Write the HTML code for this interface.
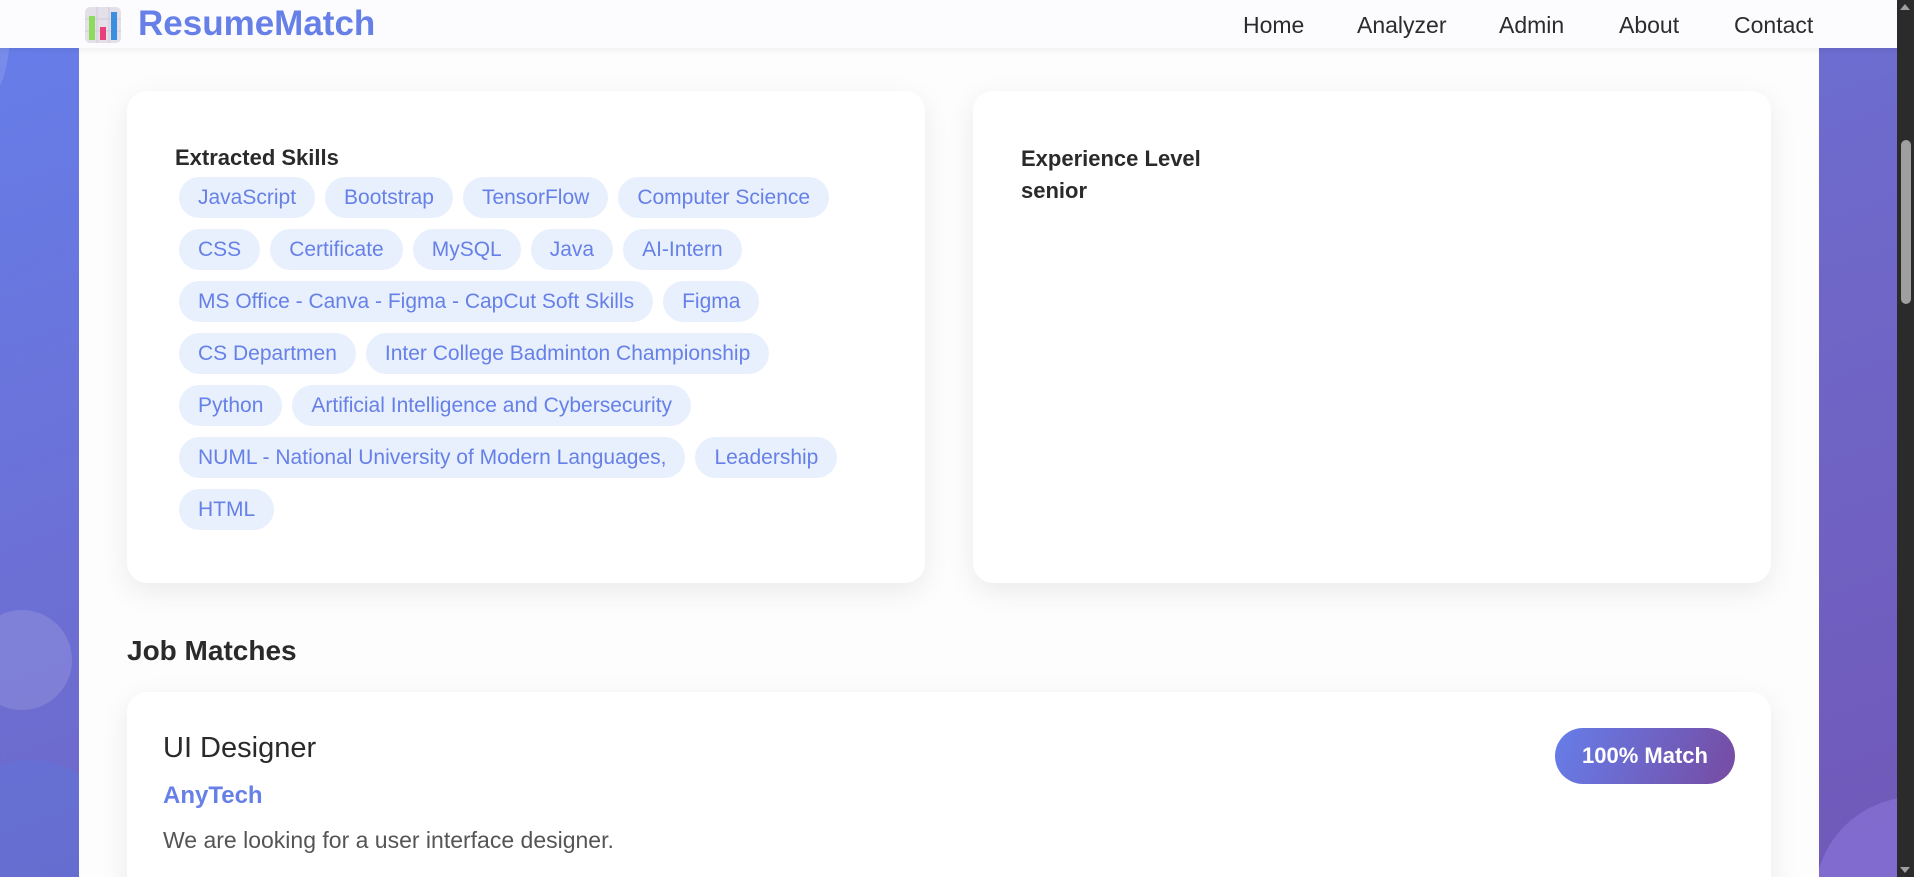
<!DOCTYPE html>
<html><head><meta charset="utf-8"><style>
*{margin:0;padding:0;box-sizing:border-box}
html,body{width:1914px;height:877px;overflow:hidden}
body{font-family:"Liberation Sans",sans-serif;background:linear-gradient(160deg,#667eea 0%,#6f67c8 60%,#7058b8 100%);position:relative}
.circ{position:absolute;border-radius:50%}
.sb{position:absolute;right:0;top:0;width:17px;height:877px;background:#2b2b2b}
.sb .th{position:absolute;left:4px;top:140px;width:10px;height:164px;background:#9f9f9f;border-radius:5px}
.sb .up{position:absolute;left:3px;top:4px;border:5px solid transparent;border-bottom:6px solid #9f9f9f;border-top:0}
.sb .dn{position:absolute;left:3px;bottom:4px;border:5px solid transparent;border-top:6px solid #9f9f9f;border-bottom:0}
.cont{position:absolute;left:79px;top:0;width:1740px;height:877px;background:#fdfdfd;overflow:hidden}
nav{position:absolute;left:0;top:0;width:1897px;height:48px;background:#fcfcfe;box-shadow:0 2px 6px rgba(0,0,0,.06);z-index:5}
.logo{position:absolute;left:138px;top:4px;font-size:35px;font-weight:bold;color:#6680e8}
.nl{position:absolute;top:12px;font-size:23px;color:#2c2c2c}
.card{position:absolute;background:#fff;border-radius:20px;box-shadow:0 8px 28px rgba(0,0,0,.08)}
h3{position:absolute;font-size:22px;font-weight:bold;color:#2a2a2a}
.row{position:absolute;left:52px;display:flex;gap:10px;white-space:nowrap}
.tag{height:41px;line-height:41px;padding:0 19px;border-radius:21px;background:#e8f0fd;color:#6680e8;font-size:21px}
</style></head><body>
<div class="circ" style="left:-40px;top:-40px;width:50px;height:140px;background:rgba(255,255,255,.12)"></div>
<div class="circ" style="left:-28px;top:610px;width:100px;height:100px;background:rgba(255,255,255,.13)"></div>
<div class="circ" style="left:-60px;top:760px;width:180px;height:180px;background:rgba(90,120,220,.35)"></div>
<div class="circ" style="left:1815px;top:797px;width:200px;height:200px;background:rgba(140,120,220,.6)"></div>
<div class="cont">
 <div class="card" style="left:48px;top:91px;width:798px;height:492px">
  <h3 style="left:48px;top:54px">Extracted Skills</h3>
  <div class="row" style="top:86px"><span class="tag">JavaScript</span><span class="tag">Bootstrap</span><span class="tag">TensorFlow</span><span class="tag">Computer Science</span></div>
  <div class="row" style="top:138px"><span class="tag">CSS</span><span class="tag">Certificate</span><span class="tag">MySQL</span><span class="tag">Java</span><span class="tag">AI-Intern</span></div>
  <div class="row" style="top:190px"><span class="tag">MS Office - Canva - Figma - CapCut Soft Skills</span><span class="tag">Figma</span></div>
  <div class="row" style="top:242px"><span class="tag">CS Departmen</span><span class="tag">Inter College Badminton Championship</span></div>
  <div class="row" style="top:294px"><span class="tag">Python</span><span class="tag">Artificial Intelligence and Cybersecurity</span></div>
  <div class="row" style="top:346px"><span class="tag">NUML - National University of Modern Languages,</span><span class="tag">Leadership</span></div>
  <div class="row" style="top:398px"><span class="tag">HTML</span></div>
 </div>
 <div class="card" style="left:894px;top:91px;width:798px;height:492px">
  <h3 style="left:48px;top:52px;line-height:32px">Experience Level<br>senior</h3>
 </div>
 <div style="position:absolute;left:48px;top:635px;font-size:28px;font-weight:bold;color:#2a2a2a">Job Matches</div>
 <div class="card" style="left:48px;top:692px;width:1644px;height:220px">
  <div style="position:absolute;left:36px;top:40px;font-size:29px;color:#2a2a2a">UI Designer</div>
  <div style="position:absolute;left:36px;top:90px;font-size:24px;color:#6680e8;font-weight:bold">AnyTech</div>
  <div style="position:absolute;left:36px;top:135px;font-size:23px;color:#555">We are looking for a user interface designer.</div>
  <div style="position:absolute;left:1428px;top:36px;width:180px;height:56px;border-radius:28px;background:linear-gradient(110deg,#667eea,#764ba2);color:#fff;font-weight:bold;font-size:22px;line-height:56px;text-align:center">100% Match</div>
 </div>
</div>
<nav>
 <svg style="position:absolute;left:85px;top:7px" width="36" height="36" viewBox="0 0 36 36"><rect x="0" y="0" width="36" height="36" rx="5" fill="#e4e0ea"/><path d="M12 0V36M24 0V36M0 12H36M0 24H36" stroke="#cfcad8" stroke-width="1"/><rect x="4" y="9" width="6" height="24" fill="#8edb5a"/><rect x="15" y="20" width="6" height="13" fill="#e8407a"/><rect x="26" y="5" width="6" height="28" fill="#3a8fe0"/></svg>
 <div class="logo">ResumeMatch</div>
 <div class="nl" style="left:1243px">Home</div>
 <div class="nl" style="left:1357px">Analyzer</div>
 <div class="nl" style="left:1499px">Admin</div>
 <div class="nl" style="left:1619px">About</div>
 <div class="nl" style="left:1734px">Contact</div>
</nav>
<div class="sb"><div class="up"></div><div class="th"></div><div class="dn"></div></div>
</body></html>
